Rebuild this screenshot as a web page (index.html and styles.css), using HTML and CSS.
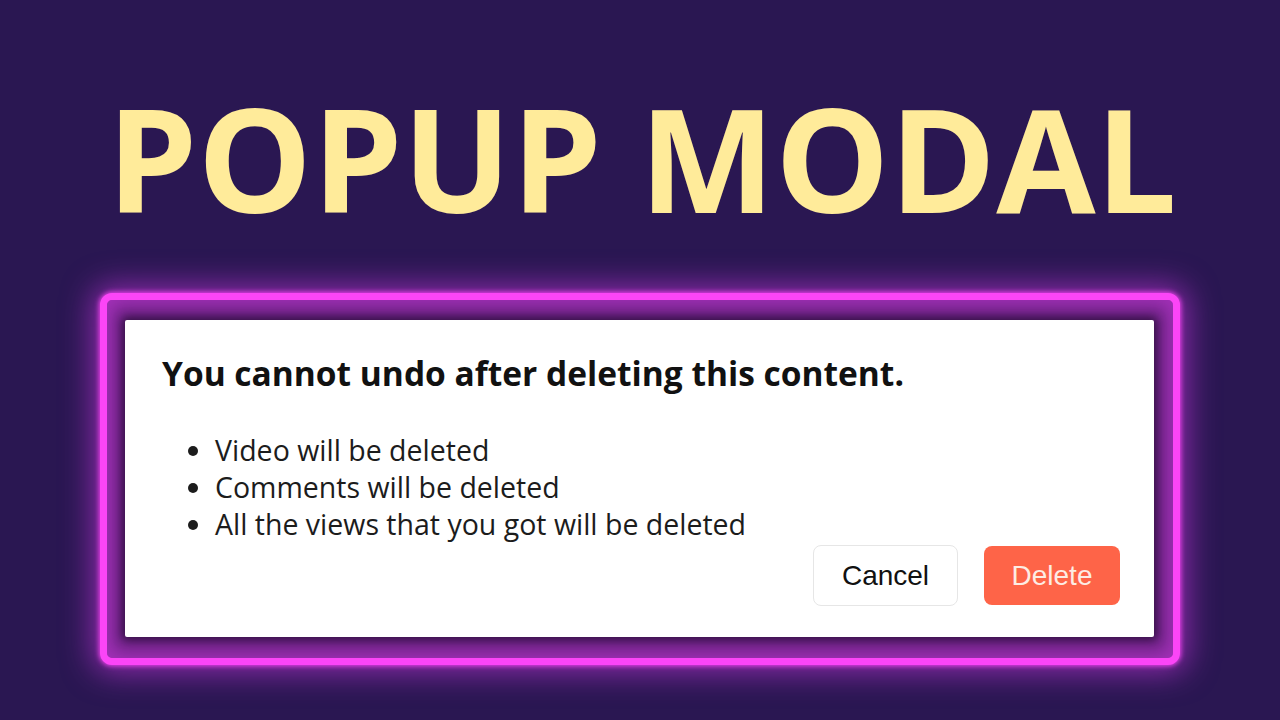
FILE: index.html
```html
<!DOCTYPE html>
<html lang="en">
<head>
<meta charset="utf-8">
<title>Popup Modal</title>
<link rel="stylesheet" href="styles.css">
</head>
<body>
<main class="page">
  <h1 class="title">POPUP MODAL</h1>
  <div class="frame">
    <section class="modal">
      <h2 class="modal-heading">You cannot undo after deleting this content.</h2>
      <ul class="modal-list">
        <li>Video will be deleted</li>
        <li>Comments will be deleted</li>
        <li>All the views that you got will be deleted</li>
      </ul>
      <div class="modal-actions">
        <button class="btn btn-cancel">Cancel</button>
        <button class="btn btn-delete">Delete</button>
      </div>
    </section>
  </div>
</main>
</body>
</html>
```

FILE: styles.css
```css
html, body {
  margin: 0;
  padding: 0;
}
body {
  width: 1280px;
  height: 720px;
  overflow: hidden;
  background: #2a1752;
  font-family: "Open Sans", "DejaVu Sans", sans-serif;
}
.page {
  display: flex;
  flex-direction: column;
  align-items: center;
  padding-top: 85px;
}
.title {
  margin: 0;
  font-family: "Open Sans", sans-serif;
  font-weight: 700;
  font-size: 144px;
  line-height: 144px;
  color: #ffeb9a;
  letter-spacing: 0;
  margin-left: 4px;
}
.frame {
  margin-top: 64px;
  width: 1080px;
  box-sizing: border-box;
  border: 7px solid #fb45f7;
  border-radius: 12px;
  padding: 20px 19px 21px 18px;
  background: #6a2282;
  box-shadow:
    0 0 5px 1px rgba(251, 69, 247, 0.9),
    0 0 30px 8px rgba(180, 50, 205, 0.7),
    inset 0 0 18px 6px rgba(190, 55, 210, 0.7);
}
.modal {
  background: #fff;
  border-radius: 2px;
  box-shadow: 0 0 9px 3px rgba(40, 12, 55, 0.8);
  padding: 33px 34px 31px 37px;
  display: flex;
  flex-direction: column;
}
.modal-heading {
  margin: 0;
  font-weight: 700;
  font-size: 33.5px;
  line-height: 40px;
  color: #111;
}
.modal-list {
  margin: 39px 0 0 0;
  padding-left: 53px;
  list-style: disc;
  font-size: 28.5px;
  line-height: 37px;
  color: #1c1c1c;
}
.modal-actions {
  display: flex;
  justify-content: flex-end;
  align-items: center;
  gap: 26px;
  margin-top: 2px;
}
.btn {
  font-family: "Liberation Sans", Arial, sans-serif;
  font-size: 28px;
  border-radius: 8px;
  cursor: pointer;
}
.btn-cancel {
  width: 145px;
  height: 61px;
  background: #fff;
  border: 1px solid #e6e6e6;
  color: #111;
}
.btn-delete {
  width: 136px;
  height: 59px;
  background: #fe6448;
  border: none;
  color: #fdece4;
}
```
